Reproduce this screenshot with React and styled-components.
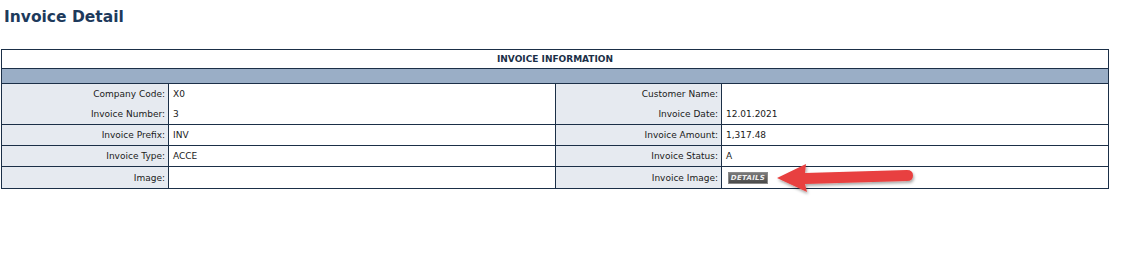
import React from 'react';
import styled, { createGlobalStyle } from 'styled-components';

const GlobalStyle = createGlobalStyle`
  body {
    margin: 0;
    background: #ffffff;
    font-family: "DejaVu Sans", Verdana, sans-serif;
  }
`;

const Page = styled.div`
  position: relative;
  width: 1121px;
  height: 260px;
  padding: 0 0 0 1px;
  box-sizing: border-box;
`;

const Title = styled.h1`
  margin: 0;
  padding: 8px 0 0 3px;
  height: 49px;
  box-sizing: border-box;
  font-size: 15.5px;
  line-height: 18px;
  font-weight: bold;
  color: #1d3a5c;
`;

const InfoTable = styled.table`
  width: 1108px;
  border-collapse: collapse;
  table-layout: fixed;
  font-size: 9px;
  color: #1a1a1a;
`;

const HeadCell = styled.th`
  height: 18px;
  padding: 0;
  border: 1px solid #1b2f47;
  font-size: 9px;
  font-weight: bold;
  color: #1b2f47;
  text-align: center;
  background: #ffffff;
`;

const Band = styled.td`
  height: 14px;
  padding: 0;
  border: 1px solid #1b2f47;
  background: #9aaec6;
`;

const Label = styled.td`
  height: ${(p) => p.$h}px;
  padding: 0 3px 0 0;
  border: 1px solid #1b2f47;
  ${(p) => p.$joinBelow && 'border-bottom: none;'}
  ${(p) => p.$joinAbove && 'border-top: none;'}
  background: #e6eaf0;
  text-align: right;
  white-space: nowrap;
`;

const Value = styled.td`
  height: ${(p) => p.$h}px;
  padding: 0 0 0 4px;
  border: 1px solid #1b2f47;
  ${(p) => p.$joinBelow && 'border-bottom: none;'}
  ${(p) => p.$joinAbove && 'border-top: none;'}
  background: #ffffff;
  text-align: left;
  white-space: nowrap;
`;

const DetailsButton = styled.span`
  display: inline-block;
  vertical-align: middle;
  width: 38px;
  height: 10px;
  line-height: 10px;
  border: 1px solid #8a8a8a;
  background: linear-gradient(#7a7a7a, #4a4a4a);
  color: #f0f0f0;
  font-size: 7px;
  font-weight: bold;
  font-style: italic;
  text-align: center;
  letter-spacing: 0.3px;
  margin-left: 2px;
`;

const Arrow = styled.svg`
  position: absolute;
  left: 770px;
  top: 158px;
  width: 150px;
  height: 42px;
  overflow: visible;
`;

const rows = [
  { l1: 'Company Code:', v1: 'X0', l2: 'Customer Name:', v2: '', h: 20, joinBelow: true },
  { l1: 'Invoice Number:', v1: '3', l2: 'Invoice Date:', v2: '12.01.2021', h: 20, joinAbove: true },
  { l1: 'Invoice Prefix:', v1: 'INV', l2: 'Invoice Amount:', v2: '1,317.48', h: 20 },
  { l1: 'Invoice Type:', v1: 'ACCE', l2: 'Invoice Status:', v2: 'A', h: 20 },
  { l1: 'Image:', v1: '', l2: 'Invoice Image:', v2: 'button', h: 21 },
];

export default function App() {
  return (
    <>
      <GlobalStyle />
      <Page>
        <Title>Invoice Detail</Title>
        <InfoTable>
          <colgroup>
            <col style={{ width: 167 }} />
            <col style={{ width: 387 }} />
            <col style={{ width: 166 }} />
            <col />
          </colgroup>
          <tbody>
            <tr>
              <HeadCell colSpan={4}>INVOICE INFORMATION</HeadCell>
            </tr>
            <tr>
              <Band colSpan={4} />
            </tr>
            {rows.map((r) => (
              <tr key={r.l1}>
                <Label $h={r.h} $joinBelow={r.joinBelow} $joinAbove={r.joinAbove}>{r.l1}</Label>
                <Value $h={r.h} $joinBelow={r.joinBelow} $joinAbove={r.joinAbove}>{r.v1}</Value>
                <Label $h={r.h} $joinBelow={r.joinBelow} $joinAbove={r.joinAbove}>{r.l2}</Label>
                <Value $h={r.h} $joinBelow={r.joinBelow} $joinAbove={r.joinAbove}>
                  {r.v2 === 'button' ? <DetailsButton>DETAILS</DetailsButton> : r.v2}
                </Value>
              </tr>
            ))}
          </tbody>
        </InfoTable>
        <Arrow viewBox="770 158 150 42">
          <defs>
            <filter id="arrowShadow" x="-10%" y="-30%" width="120%" height="170%">
              <feDropShadow dx="1" dy="2" stdDeviation="1.5" floodColor="#000" floodOpacity="0.35" />
            </filter>
          </defs>
          <path
            d="M777 178 L806 164 L805 173 L907 170 Q913 170 913 175.5 Q913 181 907 181 L805 184 L807 192 Z"
            fill="#e8413f"
            filter="url(#arrowShadow)"
          />
        </Arrow>
      </Page>
    </>
  );
}
